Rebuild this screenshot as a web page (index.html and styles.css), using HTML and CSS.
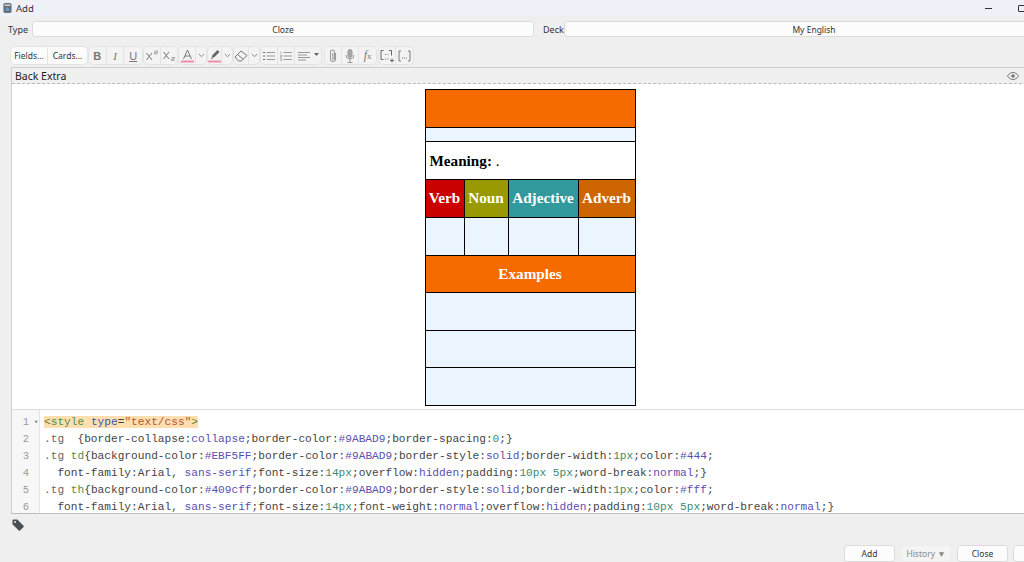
FILE: index.html
```html
<!DOCTYPE html>
<html lang="en">
<head>
    <meta charset="UTF-8">
    <title>Add</title>
    <link rel="stylesheet" href="styles.css">
</head>
<body>
<div class="window">
    <!-- title bar -->
    <div class="titlebar">
        <svg class="app-icon" width="9" height="12" viewBox="0 0 11 13">
            <rect x="0.5" y="0.5" width="10" height="12" rx="2" fill="#6b7178"/>
            <rect x="2" y="2" width="7" height="2" fill="#c9ccd0"/>
            <path d="M5.5 5l1 2 2 .3-1.5 1.4.4 2-1.9-1-1.9 1 .4-2L2.5 7.3l2-.3z" fill="#58a6e0"/>
        </svg>
        <span class="title">Add</span>
        <div class="controls">
            <span class="ctl-min"></span>
            <span class="ctl-max"></span>
        </div>
    </div>

    <!-- note type and deck -->
    <div class="chooser">
        <span class="label type-label">Type</span>
        <button class="choose type-btn">Cloze</button>
        <span class="label deck-label">Deck</span>
        <button class="choose deck-btn">My English</button>
    </div>

    <!-- toolbar -->
    <div class="toolbar">
        <div class="group white">
            <button class="tb text-btn fields">Fields...</button>
            <button class="tb text-btn cards">Cards...</button>
        </div>
        <div class="group">
            <button class="tb w18 glyph bold">B</button>
            <button class="tb w18 glyph italic">I</button>
            <button class="tb w18 glyph underline">U</button>
        </div>
        <div class="group">
            <button class="tb w16">
                <svg width="14" height="12" viewBox="0 0 14 12"><path d="M1.500 3l5.500 7M7 3l-5.500 7" stroke="#777" fill="none"/><path d="M9.500 1h3v1.500h-3V4h3" stroke="#888" fill="none" stroke-width=".7"/></svg>
            </button>
            <button class="tb w16">
                <svg width="14" height="12" viewBox="0 0 14 12"><path d="M1.500 2l5.500 7M7 2l-5.500 7" stroke="#777" fill="none"/><path d="M9.500 7.500h3V9h-3v1.500h3" stroke="#888" fill="none" stroke-width=".7"/></svg>
            </button>
        </div>
        <div class="group">
            <button class="tb w17">
                <svg width="13" height="14" viewBox="0 0 13 14"><path d="M2.500 10L6.500 1l4 9M4 7h5" stroke="#777" fill="none"/><rect x="0" y="11.500" width="13" height="2" fill="#f08ca8"/></svg>
            </button>
            <button class="tb w10"><svg width="7" height="5" viewBox="0 0 7 5"><path d="M.8 1l2.700 2.700L6.200 1" stroke="#888" fill="none"/></svg></button>
        </div>
        <div class="group">
            <button class="tb w14">
                <svg width="13" height="14" viewBox="0 0 13 14"><path d="M3.500 9l1-3 5-5 2 2-5 5z" fill="#666"/><path d="M2.500 10l1.500-1 1 1z" fill="#666"/><rect x="0" y="11.500" width="13" height="2" fill="#f08ca8"/></svg>
            </button>
            <button class="tb w10"><svg width="7" height="5" viewBox="0 0 7 5"><path d="M.8 1l2.700 2.700L6.200 1" stroke="#888" fill="none"/></svg></button>
        </div>
        <div class="group">
            <button class="tb w15">
                <svg width="14" height="12" viewBox="0 0 14 12"><path d="M1 7l6-6 6 4.500-5.500 5.500H4.500z" stroke="#777" fill="none"/><path d="M3.500 4.500l5.500 4.500" stroke="#777" fill="none"/></svg>
            </button>
            <button class="tb w10"><svg width="7" height="5" viewBox="0 0 7 5"><path d="M.8 1l2.700 2.700L6.200 1" stroke="#888" fill="none"/></svg></button>
        </div>
        <div class="group">
            <button class="tb w17">
                <svg width="12" height="10" viewBox="0 0 12 10"><path d="M3.500 1.500H12M3.500 5H12M3.500 8.500H12" stroke="#999"/><path d="M0 1.500h2M0 5h2M0 8.500h2" stroke="#666" stroke-width="1.200"/></svg>
            </button>
            <button class="tb w17">
                <svg width="12" height="10" viewBox="0 0 12 10"><path d="M3.500 1.500H12M3.500 5H12M3.500 8.500H12" stroke="#999"/><path d="M.8 .5v2M.2 4h1.500v1.200H.2v1h1.500M.2 7.500h1.500v2H.2" stroke="#888" stroke-width=".6" fill="none"/></svg>
            </button>
            <button class="tb w26">
                <svg width="21" height="10" viewBox="0 0 21 10"><path d="M0 1.500h12M0 4h9M0 6.500h12M0 9h8" stroke="#999"/><path d="M16 2h5l-2.500 3z" fill="#666"/></svg>
            </button>
        </div>
        <div class="group media">
            <button class="tb w17">
                <svg width="8" height="14" viewBox="0 0 8 14"><path d="M6.500 4v6a2.500 2.500 0 0 1-5 0V3a2 2 0 0 1 4 0v6.500a.8.8 0 0 1-1.700 0V4" stroke="#999" fill="none" stroke-width="1.100"/></svg>
            </button>
            <button class="tb w17">
                <svg width="10" height="14" viewBox="0 0 10 14"><rect x="3" y="0.500" width="4" height="8" rx="2" fill="#aaa" stroke="#999"/><path d="M1 6a4 4 0 0 0 8 0M5 10v3M2.500 13.500h5" stroke="#999" fill="none"/></svg>
            </button>
            <button class="tb w17 glyph fx">f<sub>x</sub></button>
        </div>
        <div class="group">
            <button class="tb w17">
                <svg width="14" height="14" viewBox="0 0 14 14"><path d="M3.500 1.500h-2.500v9h2.500M9 1.500h2.500v5M5 10h1M7.500 10h1" stroke="#666" fill="none"/><path d="M5 5.500h.8M7.500 5.500h.8M10 11.500h4M12 9.500v4" stroke="#666" fill="none"/></svg>
            </button>
            <button class="tb w17">
                <svg width="13" height="12" viewBox="0 0 13 12"><path d="M3 1H1v10h2M10 1h2v10h-2" stroke="#777" fill="none"/><path d="M4 8h1M6 8h1M8 8h1" stroke="#777"/></svg>
            </button>
        </div>
    </div>

    <!-- field -->
    <div class="field">
        <div class="field-head">
            <span class="field-name">Back Extra</span>
            <svg class="eye" width="12" height="8" viewBox="0 0 12 8"><path d="M.5 4C2 1.500 4 .5 6 .5S10 1.500 11.500 4C10 6.500 8 7.500 6 7.500S2 6.500 .5 4z" stroke="#777" fill="none"/><circle cx="6" cy="4" r="1.800" fill="#777"/></svg>
        </div>

        <div class="preview">
            <table class="tg">
                <colgroup>
                    <col class="c-verb"><col class="c-noun"><col class="c-adj"><col class="c-adv">
                </colgroup>
                <tr><td colspan="4" class="orange"></td></tr>
                <tr class="thin"><td colspan="4"></td></tr>
                <tr><td colspan="4" class="meaning"><b>Meaning:</b> .</td></tr>
                <tr class="heads">
                    <th class="verb">Verb</th>
                    <th class="noun">Noun</th>
                    <th class="adj">Adjective</th>
                    <th class="adv">Adverb</th>
                </tr>
                <tr><td></td><td></td><td></td><td></td></tr>
                <tr class="heads short"><th colspan="4" class="orange">Examples</th></tr>
                <tr><td colspan="4"></td></tr>
                <tr class="short"><td colspan="4"></td></tr>
                <tr><td colspan="4"></td></tr>
            </table>
        </div>

        <div class="code">
            <div class="gutter">
                <div>1<span class="fold">▾</span></div>
                <div>2</div>
                <div>3</div>
                <div>4</div>
                <div>5</div>
                <div>6</div>
            </div>
            <div class="lines">
<pre><span class="match"><span class="br">&lt;</span><span class="tag">style</span> <span class="attr">type</span>=<span class="str">"text/css"</span><span class="br">&gt;</span></span></pre>
<pre><span class="q">.tg</span>  {border-collapse:<span class="a">collapse</span>;border-color:<span class="a">#9ABAD9</span>;border-spacing:<span class="n">0</span>;}</pre>
<pre><span class="q">.tg</span> <span class="tag">td</span>{background-color:<span class="a">#EBF5FF</span>;border-color:<span class="a">#9ABAD9</span>;border-style:<span class="a">solid</span>;border-width:<span class="n">1px</span>;color:<span class="a">#444</span>;</pre>
<pre>  font-family:Arial, <span class="a">sans-serif</span>;font-size:<span class="n">14px</span>;overflow:<span class="a">hidden</span>;padding:<span class="n">10px</span> <span class="n">5px</span>;word-break:<span class="a">normal</span>;}</pre>
<pre><span class="q">.tg</span> <span class="tag">th</span>{background-color:<span class="a">#409cff</span>;border-color:<span class="a">#9ABAD9</span>;border-style:<span class="a">solid</span>;border-width:<span class="n">1px</span>;color:<span class="a">#fff</span>;</pre>
<pre>  font-family:Arial, <span class="a">sans-serif</span>;font-size:<span class="n">14px</span>;font-weight:<span class="a">normal</span>;overflow:<span class="a">hidden</span>;padding:<span class="n">10px</span> <span class="n">5px</span>;word-break:<span class="a">normal</span>;}</pre>
            </div>
        </div>
    </div>

    <!-- tags -->
    <div class="tags">
        <svg width="12" height="12" viewBox="0 0 13 13"><path d="M.5 1.500a1 1 0 0 1 1-1h4.200l6.800 6.800a1 1 0 0 1 0 1.400l-3.800 3.800a1 1 0 0 1-1.400 0L.5 5.700z" fill="#4a4f55"/><circle cx="3.300" cy="3.300" r="1" fill="#efefef"/></svg>
    </div>

    <!-- bottom buttons -->
    <div class="actions">
        <button class="act">Add</button>
        <button class="act off">History ▼</button>
        <button class="act">Close</button>
        <button class="act help"></button>
    </div>
</div>
</body>
</html>
```

FILE: styles.css
```css
html, body {
    margin: 0;
    height: 562px;
    overflow: hidden;
}

body {
    font-family: "Noto Sans", "Liberation Sans", sans-serif;
    background-color: #efefef;
    color: #222;
}

button {
    font-family: inherit;
    padding: 0;
    margin: 0;
    cursor: pointer;
}

.window {
    width: 1072px;
    height: 562px;
    display: flex;
    flex-direction: column;
}

/* title bar */
.titlebar {
    height: 17px;
    display: flex;
    align-items: center;
    padding-left: 3px;
    background: #eef1f8;
    font-size: 9.500px;
    color: #333;
}

.app-icon {
    margin-right: 4px;
}

.controls {
    margin-left: auto;
    margin-right: 47px;
    display: flex;
    align-items: center;
    gap: 26px;
}

.ctl-min {
    width: 7px;
    height: 1px;
    background: #333;
}

.ctl-max {
    width: 5px;
    height: 5px;
    border: 1px solid #333;
    border-radius: 1px;
}

/* type and deck */
.chooser {
    height: 16px;
    margin-top: 5px;
    display: flex;
    align-items: center;
    font-size: 9px;
}

.label {
    color: #333;
}

.type-label {
    width: 24px;
    margin-left: 8px;
}

.deck-label {
    width: 21px;
    margin-left: 9px;
}

.choose {
    height: 16px;
    background: #fcfcfc;
    border: 1px solid #dcdcdc;
    border-radius: 3px;
    font-size: 8.500px;
    color: #333;
}

.type-btn {
    width: 502px;
}

.deck-btn {
    width: 500px;
}

/* toolbar */
.toolbar {
    height: 18px;
    margin-top: 9px;
    padding-left: 10px;
    display: flex;
}

.group {
    display: flex;
    border: 1px solid #e4e4e4;
    border-radius: 5px;
    background: #f3f3f3;
    overflow: hidden;
    height: 17px;
}

.group.white {
    background: #fcfcfc;
}

.group.media {
    margin-left: 2px;
    margin-right: 1px;
}

.tb {
    height: 17px;
    border: 0;
    border-right: 1px solid #e4e4e4;
    background: transparent;
    display: flex;
    align-items: center;
    justify-content: center;
    color: #777;
}

.tb:last-child {
    border-right: 0;
}

.text-btn {
    font-size: 8.500px;
    color: #333;
}

.fields {
    width: 37px;
}

.cards {
    width: 39px;
}

.w10 { width: 10px; }
.w14 { width: 14px; }
.w15 { width: 15px; }
.w16 { width: 16.500px; }
.w17 { width: 17px; }
.w18 { width: 17.700px; }
.w26 { width: 26px; }

.glyph {
    font-family: "Liberation Sans", sans-serif;
    font-size: 11px;
}

.bold { font-weight: bold; }
.italic { font-style: italic; font-family: "Liberation Serif", serif; }
.underline { text-decoration: underline; }

.fx {
    font-family: "Liberation Serif", serif;
    font-style: italic;
    font-size: 12px;
}

.fx sub {
    font-size: 9px;
    font-style: normal;
    line-height: 0;
}

/* field */
.field {
    margin-top: 3px;
    margin-left: 11px;
    height: 445px;
    display: flex;
    flex-direction: column;
    border-left: 1px solid #cfcfcf;
    border-top: 1px solid #cfcfcf;
    border-bottom: 1px solid #bdbdbd;
}

.field-head {
    height: 15px;
    flex: none;
    display: flex;
    align-items: center;
    padding-left: 3px;
    background: #f0f0f0;
    border-bottom: 1px dashed #bbb;
}

.field-name {
    font-size: 10.500px;
    color: #222;
}

.eye {
    margin-left: auto;
    margin-right: 53px;
}

.preview {
    height: 325px;
    flex: none;
    background: #fff;
    padding: 5px 24px 0 0;
    box-sizing: border-box;
    display: flex;
    justify-content: center;
}

/* the card table */
.tg {
    border-collapse: collapse;
    table-layout: fixed;
    width: 210px;
    font-family: "Liberation Serif", serif;
    font-size: 15.200px;
    align-self: flex-start;
}

.c-verb { width: 39px; }
.c-noun { width: 44px; }
.c-adj { width: 70px; }
.c-adv { width: 57px; }

.tg td, .tg th {
    border: 1px solid #000;
    background: #ebf5ff;
    padding: 0;
    height: 37px;
    box-sizing: content-box;
}

.tg .thin td {
    height: 13px;
}

.tg .short td {
    height: 36px;
}

.tg .heads th {
    height: 36px;
    padding-bottom: 1px;
}

.tg .short th {
    height: 35px;
}

.tg th {
    color: #fff;
    text-align: center;
}

.tg .orange {
    background: #f56b00;
}

.tg .meaning {
    background: #fff;
    padding-left: 4px;
    color: #000;
}

.tg .verb { background: #cb0000; }
.tg .noun { background: #999903; }
.tg .adj { background: #329a9d; }
.tg .adv { background: #cd6600; }

/* code editor */
.code {
    flex: 1;
    min-height: 0;
    display: flex;
    background: #fff;
    border-top: 1px solid #ddd;
    overflow: hidden;
    font-family: "Liberation Mono", monospace;
    font-size: 11.170px;
    line-height: 17px;
    padding-top: 4px;
}

.gutter {
    width: 27px;
    flex: none;
    margin-top: -4px;
    padding-top: 4px;
    background: #f7f7f7;
    border-right: 1px solid #e4e4e4;
    color: #999;
    font-size: 10.500px;
    text-align: right;
}

.gutter div {
    padding-right: 10px;
    position: relative;
}

.fold {
    position: absolute;
    left: 22px;
    top: 0;
    font-size: 7px;
    color: #777;
}

.lines {
    padding-left: 4px;
    color: #444;
}

.lines pre {
    margin: 0;
    font: inherit;
    height: 17px;
}

.match { background: #ffdfb0; }
.br { color: #5f7f2f; }
.tag { color: #4f8f4f; }
.attr { color: #3a55b8; }
.str { color: #b5533a; }
.q { color: #666; }
.a { color: #5a50b0; }
.n { color: #3f8a70; }

/* tags row */
.tags {
    height: 32px;
    padding: 5px 0 0 12px;
    box-sizing: border-box;
}

.tags svg {
    display: block;
}

/* bottom buttons */
.actions {
    display: flex;
    padding-left: 844px;
    gap: 6px;
}

.act {
    width: 51px;
    height: 17px;
    background: #fcfcfc;
    border: 1px solid #dcdcdc;
    border-radius: 3px;
    font-size: 8.500px;
    color: #333;
}

.act.off {
    width: 50px;
    background: #f4f4f4;
    border-color: #eee;
    color: #888;
}

.act.help {
    margin-left: -1px;
}
```
